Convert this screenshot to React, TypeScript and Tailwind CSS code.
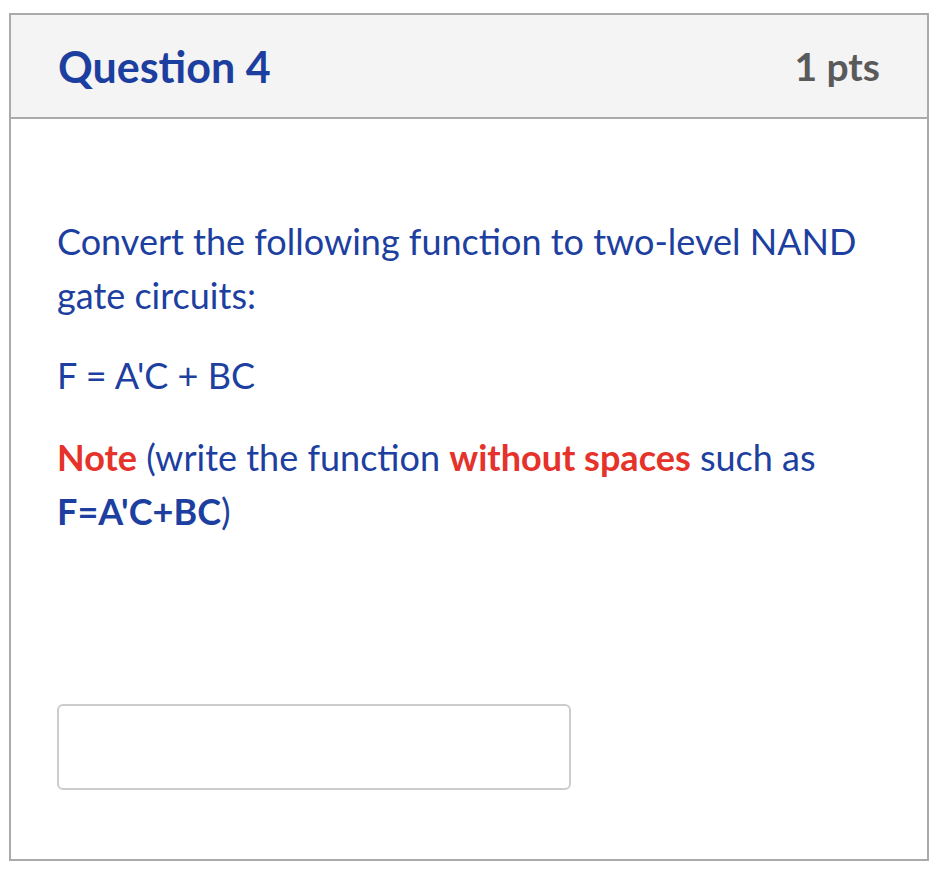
export default function App() {
  return (
    <div className="min-h-screen bg-white pt-[13px] pl-[9px]" style={{ fontFamily: 'Lato, "Liberation Sans", sans-serif' }}>
      <div className="w-[920px] h-[848px] border-2 border-[#aaaaaa] flex flex-col">
        <div className="h-[104px] bg-[#f4f4f4] border-b-2 border-[#aaaaaa] flex items-center justify-between pl-[47px] pr-[47px]">
          <h2 className="text-[43px] font-bold text-[#1c3e9e] leading-none">Question 4</h2>
          <div className="text-[39px] font-bold text-[#5a5a5a] leading-none">1 pts</div>
        </div>
        <div className="flex-1 pl-[46px] pr-[40px] pt-[95px] text-[36px] leading-[54px] text-[#1d3f9f]">
          <p>Convert the following function to two-level NAND gate circuits:</p>
          <p className="mt-[26px]">F = A'C + BC</p>
          <p className="mt-[28px]">
            <span className="font-bold text-[#e5322a]">Note</span> (write the function{' '}
            <span className="font-bold text-[#e5322a]">without spaces</span> such as{' '}
            <span className="font-bold">F=A'C+BC</span>)
          </p>
          <input
            type="text"
            className="block mt-[166px] w-[514px] h-[86px] border-2 border-[#cccccc] rounded-[6px] bg-white outline-none"
          />
        </div>
      </div>
    </div>
  );
}
